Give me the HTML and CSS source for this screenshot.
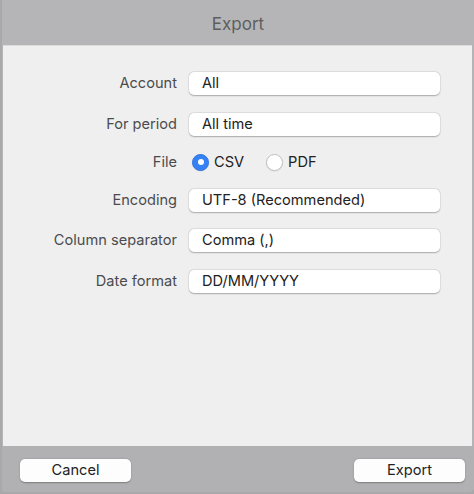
FILE: index.html
```html
<!DOCTYPE html>
<html lang="en">
<head>
<meta charset="utf-8">
<title>Export</title>
<link rel="stylesheet" href="styles.css">
</head>
<body>
<div class="window">
  <div class="titlebar">Export</div>
  <div class="content">
    <div class="form">
      <div class="label">Account</div>
      <div class="field">All</div>
      <div class="label">For period</div>
      <div class="field">All time</div>
      <div class="label label-short">File</div>
      <div class="radios">
        <label class="radio"><span class="dot checked"></span>CSV</label>
        <label class="radio"><span class="dot"></span>PDF</label>
      </div>
      <div class="label">Encoding</div>
      <div class="field">UTF-8 (Recommended)</div>
      <div class="label">Column separator</div>
      <div class="field">Comma (,)</div>
      <div class="label">Date format</div>
      <div class="field">DD/MM/YYYY</div>
    </div>
  </div>
  <div class="footer">
    <button class="btn">Cancel</button>
    <button class="btn">Export</button>
  </div>
</div>
</body>
</html>
```

FILE: styles.css
```css
html, body {
  margin: 0;
  padding: 0;
  background: #a8a8aa;
}
body {
  font-family: Inter, "Liberation Sans", Arial, sans-serif;
  -webkit-font-smoothing: antialiased;
}
.window {
  width: 474px;
  height: 494px;
  display: flex;
  flex-direction: column;
  background: #b4b4b6;
  box-sizing: border-box;
  border-left: 2px solid #a9a9ab;
  border-bottom: 2px solid #a9a9ab;
  border-radius: 0 0 6px 6px;
  overflow: hidden;
}
.titlebar {
  height: 45px;
  display: flex;
  align-items: center;
  justify-content: center;
  font-size: 17px;
  color: #5e5e60;
  padding-top: 3px;
  box-sizing: border-box;
  background: #b5b5b7;
}
.content {
  flex: 1;
  background: #efefef;
  margin: 0 2px 0 1px;
  border-top: 1px solid #dcdcdc;
  padding-top: 26px;
  box-sizing: border-box;
}
.form {
  display: grid;
  grid-template-columns: 174px 251px;
  column-gap: 12px;
  row-gap: 17.5px;
  align-items: center;
}
.label {
  text-align: right;
  font-size: 14.6px;
  color: #4b4b4d;
  line-height: 23px;
}
.label-short {
  line-height: 18px;
}
.field {
  height: 23px;
  box-sizing: border-box;
  background: #ffffff;
  border-radius: 5px;
  box-shadow: 0 0.5px 1.5px rgba(0, 0, 0, 0.28), 0 0 0 0.5px rgba(0, 0, 0, 0.06);
  padding-left: 13px;
  font-size: 14.6px;
  line-height: 23px;
  color: #222222;
}
.radios {
  display: flex;
  align-items: center;
  height: 18px;
  gap: 22px;
  margin-left: 3px;
}
.radio {
  display: flex;
  align-items: center;
  gap: 5px;
  font-size: 14.6px;
  color: #222222;
}
.dot {
  width: 17px;
  height: 17px;
  box-sizing: border-box;
  border-radius: 50%;
  background: #ffffff;
  border: 1px solid #c2c2c2;
  box-shadow: 0 0.5px 1px rgba(0, 0, 0, 0.12);
  display: flex;
  align-items: center;
  justify-content: center;
}
.dot.checked {
  background: #3482f6;
  border-color: #2f75e0;
}
.dot.checked::after {
  content: "";
  width: 6px;
  height: 6px;
  border-radius: 50%;
  background: #ffffff;
}
.footer {
  height: 46px;
  display: flex;
  justify-content: space-between;
  align-items: flex-start;
  padding: 13px 9px 0 18px;
  box-sizing: border-box;
  background: #b1b1b3;
}
.btn {
  width: 111px;
  height: 23px;
  border: none;
  border-radius: 5px;
  background: #fdfdfd;
  box-shadow: 0 0.5px 1.5px rgba(0, 0, 0, 0.3);
  font-family: inherit;
  font-size: 14.6px;
  color: #222222;
  padding: 0;
  line-height: 23px;
}
```
